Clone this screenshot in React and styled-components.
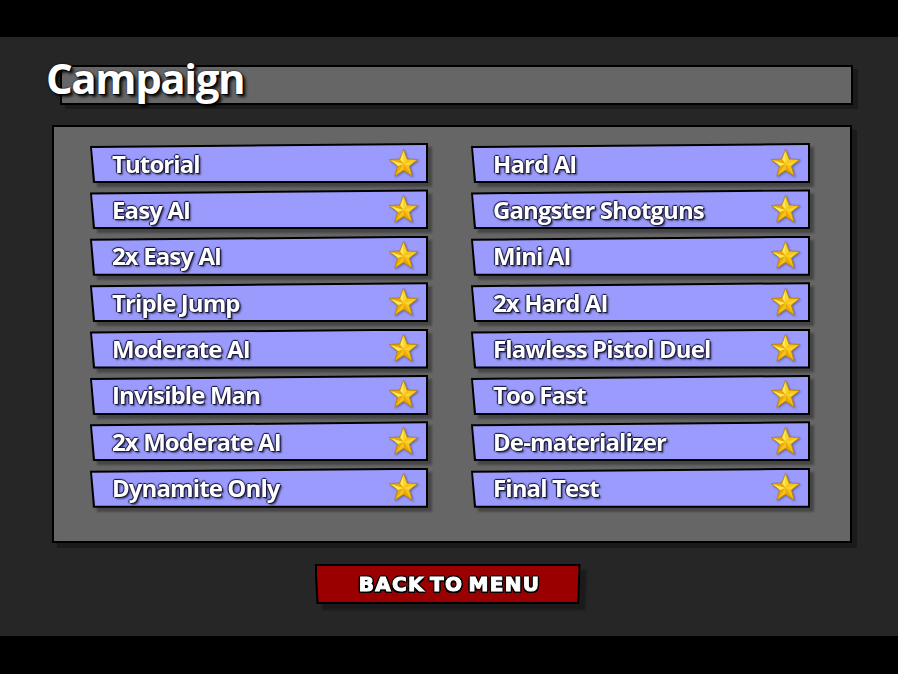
import React from 'react';
import styled, { createGlobalStyle } from 'styled-components';

const GlobalStyle = createGlobalStyle`
  html, body {
    margin: 0;
    padding: 0;
    background: #000;
  }
  * {
    box-sizing: border-box;
  }
`;

const levels = [
  ['Tutorial', 'Hard AI'],
  ['Easy AI', 'Gangster Shotguns'],
  ['2x Easy AI', 'Mini AI'],
  ['Triple Jump', '2x Hard AI'],
  ['Moderate AI', 'Flawless Pistol Duel'],
  ['Invisible Man', 'Too Fast'],
  ['2x Moderate AI', 'De-materializer'],
  ['Dynamite Only', 'Final Test'],
];

const Screen = styled.div`
  width: 898px;
  height: 674px;
  display: flex;
  flex-direction: column;
  background: #000;
  font-family: 'Open Sans', 'Liberation Sans', sans-serif;
`;

const Letterbox = styled.div`
  height: ${(p) => p.$h}px;
  flex-shrink: 0;
  background: #000;
`;

const Stage = styled.div`
  flex: 1;
  background: #262626;
  display: flex;
  flex-direction: column;
  align-items: flex-start;
  padding: 28px 0 0 0;
`;

const TitleBar = styled.div`
  margin-left: 60px;
  width: 793px;
  height: 40px;
  background: #666;
  border: 2px solid #000;
  box-shadow: 5px 4px 0 #1b1b1b;
  display: flex;
  align-items: center;
`;

const Title = styled.h1`
  margin: -14px 0 0 -16px;
  font-family: 'Open Sans', 'Liberation Sans', sans-serif;
  font-weight: 700;
  font-size: 42px;
  letter-spacing: -1.4px;
  color: #fff;
  line-height: 1;
  text-shadow: 0 0 2px #000, 1px 1px 1px #000, 3px 3px 3px rgba(0, 0, 0, 0.8);
`;

const Panel = styled.div`
  margin: 20px 0 0 52px;
  width: 800px;
  height: 418px;
  background: #666;
  border: 2px solid #000;
  box-shadow: 5px 5px 0 #1b1b1b;
  padding: 16px 40px 0 36px;
  display: grid;
  grid-template-columns: 338px 339px;
  column-gap: 43px;
  grid-auto-rows: 40px;
  row-gap: 6.4px;
  align-content: start;
`;

const LevelShadow = styled.div`
  filter: drop-shadow(4px 4px 1px rgba(0, 0, 0, 0.32));
`;

const LevelEdge = styled.div`
  height: 40px;
  background: #000;
  padding: 2px;
  clip-path: polygon(0 3px, 100% 0, 100% 100%, 3px 100%);
`;

const LevelFace = styled.button`
  width: 100%;
  height: 100%;
  border: 0;
  background: #9b9bfd;
  clip-path: polygon(0 3px, 100% 0, 100% 100%, 3px 100%);
  display: flex;
  align-items: center;
  justify-content: space-between;
  padding: 0 7px 0 20px;
  cursor: pointer;
  font-family: inherit;
  font-weight: 700;
  font-size: 24px;
  letter-spacing: -0.9px;
  color: #fff;
  text-shadow: 0 0 2px #1a1a40, 1px 1px 0 #1a1a40, -1px 0 1px #1a1a40,
    0 -1px 1px #1a1a40, 2px 2px 2px rgba(0, 0, 0, 0.55);
`;

const Footer = styled.div`
  align-self: stretch;
  display: flex;
  justify-content: center;
  padding: 21px 3px 0 0;
`;

const BackShadow = styled.div`
  filter: drop-shadow(6px 6px 1px #1a1a1a);
`;

const BackEdge = styled.div`
  width: 266px;
  height: 40px;
  background: #000;
  padding: 2px;
  clip-path: polygon(0 0, 100% 0, 99.5% 100%, 2px 100%);
`;

const BackFace = styled.button`
  width: 100%;
  height: 100%;
  border: 0;
  background: #9a0000;
  clip-path: polygon(0 0, 100% 0, 99.5% 100%, 2px 100%);
  display: flex;
  align-items: center;
  justify-content: center;
  padding: 0 0 0 4px;
  cursor: pointer;
  font-family: 'DejaVu Sans', 'Liberation Sans', sans-serif;
  font-weight: 700;
  font-size: 20px;
  letter-spacing: 1.3px;
  word-spacing: -3px;
  color: #fff;
  text-shadow: 2px 0 0 #000, -2px 0 0 #000, 0 2px 0 #000, 0 -2px 0 #000,
    1.5px 1.5px 0 #000, -1.5px -1.5px 0 #000, 1.5px -1.5px 0 #000,
    -1.5px 1.5px 0 #000;
  -webkit-text-stroke: 1px #fff;
`;

const StarSvg = styled.svg`
  width: 31px;
  height: 31px;
  flex-shrink: 0;
  filter: drop-shadow(1px 1px 1px rgba(0, 0, 0, 0.35));
`;

function Star() {
  const cx = 50;
  const cy = 52;
  const outer = [];
  const inner = [];
  for (let i = 0; i < 5; i += 1) {
    const a = ((-90 + i * 72) * Math.PI) / 180;
    const b = ((-54 + i * 72) * Math.PI) / 180;
    outer.push([cx + 48 * Math.cos(a), cy + 48 * Math.sin(a)]);
    inner.push([cx + 20 * Math.cos(b), cy + 20 * Math.sin(b)]);
  }
  const outline = outer
    .map((p, i) => `${p[0]},${p[1]} ${inner[i][0]},${inner[i][1]}`)
    .join(' ');
  const facets = [];
  for (let i = 0; i < 5; i += 1) {
    const o = outer[i];
    const left = inner[(i + 4) % 5];
    const right = inner[i];
    facets.push(
      <polygon
        key={`l${i}`}
        points={`${cx},${cy} ${left[0]},${left[1]} ${o[0]},${o[1]}`}
        fill={i === 0 || i === 4 ? '#ffe955' : '#f7c21a'}
      />,
      <polygon
        key={`r${i}`}
        points={`${cx},${cy} ${o[0]},${o[1]} ${right[0]},${right[1]}`}
        fill={i === 0 || i === 1 ? '#fcd52c' : '#e8a80c'}
      />
    );
  }
  return (
    <StarSvg viewBox="0 0 100 100">
      <polygon points={outline} fill="#f6c41c" />
      {facets}
      <polygon
        points={outline}
        fill="none"
        stroke="#b07a00"
        strokeWidth="2.5"
        strokeLinejoin="round"
      />
    </StarSvg>
  );
}

function LevelButton({ name }) {
  return (
    <LevelShadow>
      <LevelEdge>
        <LevelFace>
          <span>{name}</span>
          <Star />
        </LevelFace>
      </LevelEdge>
    </LevelShadow>
  );
}

export default function App() {
  return (
    <Screen>
      <GlobalStyle />
      <Letterbox $h={37} />
      <Stage>
        <TitleBar>
          <Title>Campaign</Title>
        </TitleBar>
        <Panel>
          {levels.map(([left, right]) => (
            <React.Fragment key={left}>
              <LevelButton name={left} />
              <LevelButton name={right} />
            </React.Fragment>
          ))}
        </Panel>
        <Footer>
          <BackShadow>
            <BackEdge>
              <BackFace>BACK TO MENU</BackFace>
            </BackEdge>
          </BackShadow>
        </Footer>
      </Stage>
      <Letterbox $h={38} />
    </Screen>
  );
}
